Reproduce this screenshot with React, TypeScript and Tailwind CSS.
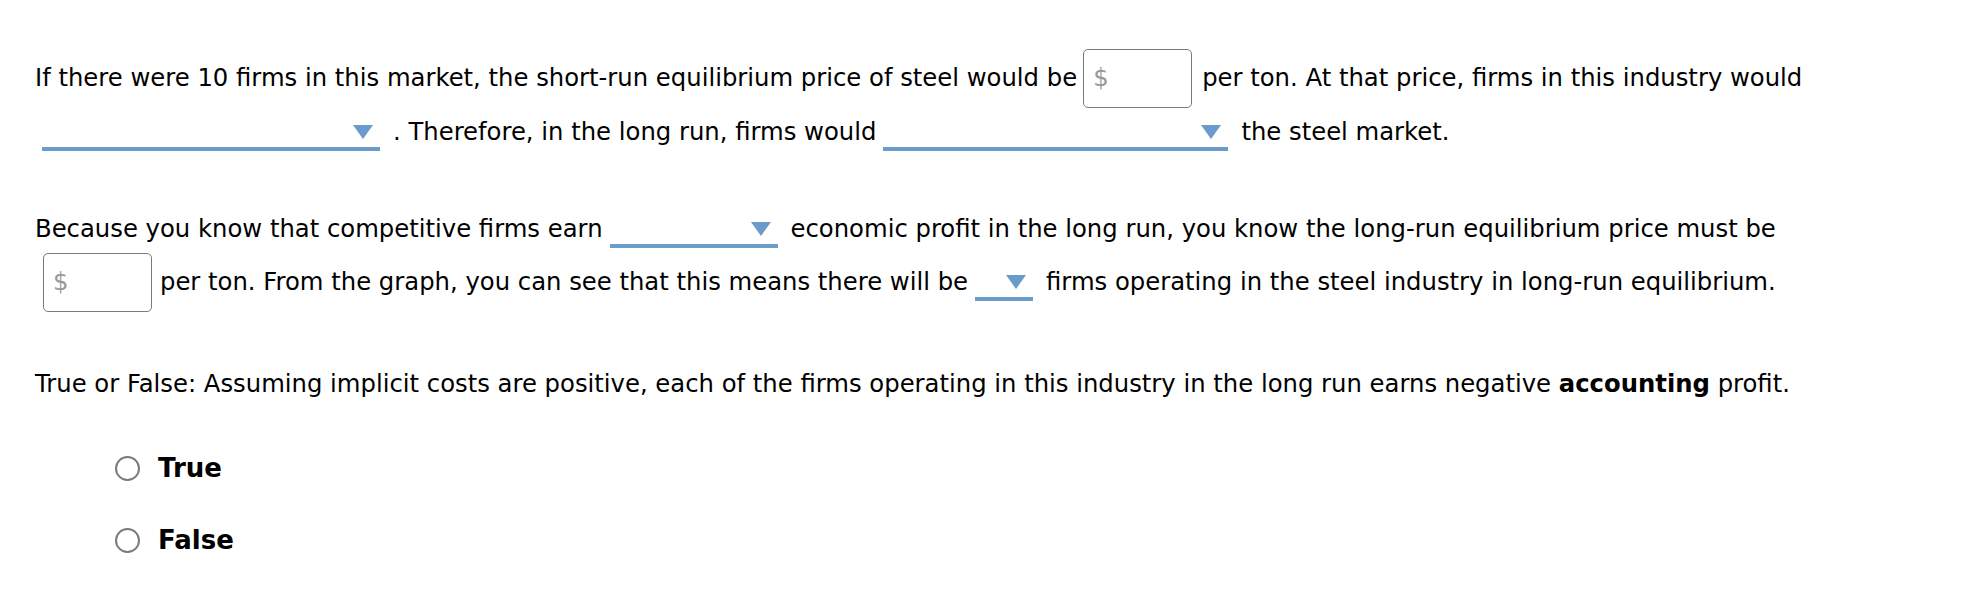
import React from "react";

const Arrow = () => (
  <svg width="20" height="14" viewBox="0 0 20 14" className="block">
    <polygon points="0,0 20,0 10,14" fill="#6b9bcb" />
  </svg>
);

const Dropdown = ({ w }: { w: string }) => (
  <div className={`${w} h-[38px] box-border border-b-[4px] border-[#6b9bcb] flex justify-end items-start pt-[12px] pr-[7px] ml-[7px] mr-[13px] shrink-0`}>
    <Arrow />
  </div>
);

const PriceBox = () => (
  <div className="w-[109px] h-[59px] box-border border border-[#7a7a7a] rounded-[5px] flex items-center pl-[9px] text-[#999999] shrink-0">
    $
  </div>
);

const Radio = ({ label, mt }: { label: string; mt: string }) => (
  <div className={`${mt} h-[26px] flex items-center pl-[80px]`}>
    <div className="w-[25px] h-[25px] rounded-full border-2 border-[#7a7a7a] box-border shrink-0" />
    <span className="ml-[18px] font-bold text-[26px]">{label}</span>
  </div>
);

export default function App() {
  return (
    <div
      className="w-[1978px] h-[614px] bg-white text-black text-[24.3px] pl-[35px] pt-[52px] whitespace-pre"
      style={{ fontFamily: '"DejaVu Sans", Verdana, sans-serif' }}
    >
      <div className="h-[52px] flex items-center">
        <span>If there were 10 firms in this market, the short-run equilibrium price of steel would be</span>
        <div className="ml-[6px] mr-[10px] flex">
          <PriceBox />
        </div>
        <span>per ton. At that price, firms in this industry would</span>
      </div>
      <div className="mt-[2px] h-[52px] flex items-center">
        <Dropdown w="w-[338px]" />
        <span>. Therefore, in the long run, firms would</span>
        <Dropdown w="w-[345px]" />
        <span>the steel market.</span>
      </div>
      <div className="mt-[45px] h-[52px] flex items-center">
        <span>Because you know that competitive firms earn</span>
        <Dropdown w="w-[168px]" />
        <span>economic profit in the long run, you know the long-run equilibrium price must be</span>
      </div>
      <div className="mt-[1px] h-[52px] flex items-center">
        <div className="ml-[8px] mr-[8px] flex">
          <PriceBox />
        </div>
        <span>per ton. From the graph, you can see that this means there will be</span>
        <Dropdown w="w-[58px]" />
        <span>firms operating in the steel industry in long-run equilibrium.</span>
      </div>
      <div className="mt-[50px] h-[52px] flex items-center">
        <span>
          True or False: Assuming implicit costs are positive, each of the firms operating in this industry in the long run earns negative{" "}
          <b>accounting</b> profit.
        </span>
      </div>
      <Radio label="True" mt="mt-[45px]" />
      <Radio label="False" mt="mt-[46px]" />
    </div>
  );
}
